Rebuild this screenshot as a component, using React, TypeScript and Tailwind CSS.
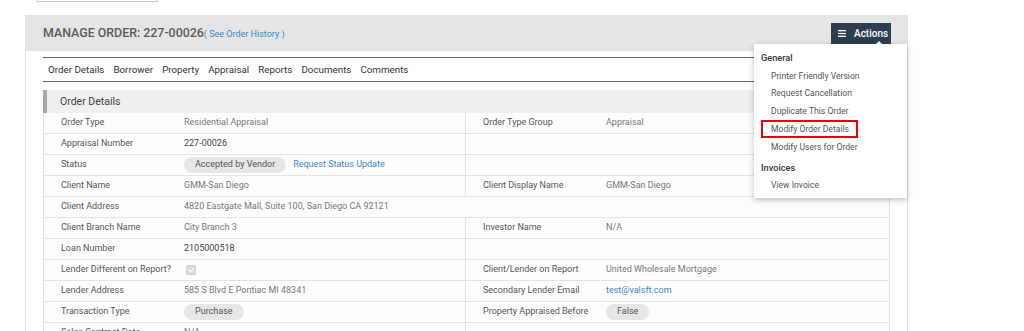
import React from 'react';

type Cell = { label: string; value?: React.ReactNode };

const Pill = ({ children }: { children: React.ReactNode }) => (
  <span className="inline-flex h-[16px] items-center rounded-full bg-[#e6e6e6] px-[11px] text-[9px] text-[#555]">{children}</span>
);

const rows: { left: Cell; right?: Cell; full?: boolean }[] = [
  { left: { label: 'Order Type', value: 'Residential Appraisal' }, right: { label: 'Order Type Group', value: 'Appraisal' } },
  { left: { label: 'Appraisal Number', value: <span className="text-[#444]">227-00026</span> }, right: { label: '' } },
  {
    left: {
      label: 'Status',
      value: (
        <span className="flex items-center gap-[7px]">
          <Pill>Accepted by Vendor</Pill>
          <span className="text-[#3b87c6]">Request Status Update</span>
        </span>
      ),
    },
    right: { label: '' },
  },
  { left: { label: 'Client Name', value: 'GMM-San Diego' }, right: { label: 'Client Display Name', value: 'GMM-San Diego' } },
  { left: { label: 'Client Address', value: '4820 Eastgate Mall, Suite 100, San Diego CA 92121' }, full: true },
  { left: { label: 'Client Branch Name', value: 'City Branch 3' }, right: { label: 'Investor Name', value: 'N/A' } },
  { left: { label: 'Loan Number', value: <span className="text-[#444]">2105000518</span> }, right: { label: '' } },
  {
    left: {
      label: 'Lender Different on Report?',
      value: (
        <span className="ml-[2px] flex h-[10px] w-[10px] items-center justify-center rounded-[2px] border border-[#cfcfcf] bg-[#dcdcdc]">
          <svg width="7" height="6" viewBox="0 0 7 6">
            <path d="M1 3 L2.8 4.8 L6 1.2" stroke="#f4f4f4" strokeWidth="1.3" fill="none" />
          </svg>
        </span>
      ),
    },
    right: { label: 'Client/Lender on Report', value: 'United Wholesale Mortgage' },
  },
  { left: { label: 'Lender Address', value: '585 S Blvd E Pontiac MI 48341' }, right: { label: 'Secondary Lender Email', value: <span className="text-[#3b87c6]">test@valsft.com</span> } },
  { left: { label: 'Transaction Type', value: <Pill>Purchase</Pill> }, right: { label: 'Property Appraised Before', value: <Pill>False</Pill> } },
  { left: { label: 'Sales Contract Date', value: 'N/A' }, right: { label: '' } },
];

const CellView = ({ cell }: { cell: Cell }) => (
  <div className="flex h-full items-center pl-[17px]">
    <span className="w-[123px] shrink-0 text-[#555]">{cell.label}</span>
    <span className="text-[#777]">{cell.value}</span>
  </div>
);

const menu = ['Printer Friendly Version', 'Request Cancellation', 'Duplicate This Order', 'Modify Order Details', 'Modify Users for Order'];

export default function App() {
  return (
    <div className="h-[331px] w-[1024px] overflow-hidden bg-white font-['Roboto',sans-serif]">
      <div className="ml-[36px] h-[2px] w-[122px] rounded-b-[3px] border-x border-b border-[#c8c8c8]" />

      <div className="ml-[25px] mt-[13px] w-[883px] border border-[#e2e2e2]">
        {/* Header */}
        <div className="flex h-[35px] items-center justify-between bg-[#e5e5e5] pl-[17px] pr-[16px]">
          <div className="flex items-baseline">
            <span className="text-[12.4px] font-medium text-[#5a5a5a]">MANAGE ORDER: 227-00026</span>
            <span className="text-[9px] text-[#3b87c6]">( See Order History )</span>
          </div>
          <div className="relative">
            <button className="flex h-[21px] w-[60px] items-center gap-[8px] bg-[#2c3e50] pl-[7px] text-[10px] font-medium text-white">
              <svg width="8" height="7" viewBox="0 0 8 7">
                <rect x="0" y="0" width="8" height="1.3" fill="white" />
                <rect x="0" y="2.85" width="8" height="1.3" fill="white" />
                <rect x="0" y="5.7" width="8" height="1.3" fill="white" />
              </svg>
              Actions
            </button>
            <div className="absolute left-[44px] top-[18px] h-0 w-0 border-x-[4px] border-b-[4px] border-x-transparent border-b-white" />
            <div className="absolute right-[-16px] top-full z-10 w-[153px] bg-white pb-[3px] pt-[5px] shadow-[0_2px_6px_rgba(0,0,0,0.25)]">
              <div className="flex h-[18px] items-center pl-[7px] text-[9.2px] font-medium text-[#333]">General</div>
              {menu.map((m) => (
                <div key={m} className="flex h-[17.75px] items-center pl-[7px] text-[8.6px] leading-none text-[#555]">
                  <span className={`border-2 py-[3px] pl-[8px] pr-[7px] ${m === 'Modify Order Details' ? 'border-[#e8000b]' : 'border-transparent'}`}>{m}</span>
                </div>
              ))}
              <div className="mt-[3px] flex h-[18px] items-center pl-[7px] text-[9.2px] font-medium text-[#333]">Invoices</div>
              <div className="flex h-[18px] items-center pl-[17px] text-[8.6px] text-[#555]">View Invoice</div>
            </div>
          </div>
        </div>

        {/* Body */}
        <div className="px-[17px] pt-[6px]">
          <div className="flex h-[25px] items-center gap-[9px] border-y border-[#666] pl-[5px] pt-[2px] text-[9.8px] text-[#333]">
            <span>Order Details</span>
            <span>Borrower</span>
            <span>Property</span>
            <span>Appraisal</span>
            <span>Reports</span>
            <span>Documents</span>
            <span>Comments</span>
          </div>

          <div className="mt-[8px] flex h-[23px] items-center border-l-[4px] border-[#a6a6a6] bg-[#efefef] pl-[13px] text-[10.5px] text-[#444]">
            Order Details
          </div>

          <div className="border-x border-[#e3e3e3] text-[9px]">
            {rows.map((r, i) => (
              <div key={i} className="grid h-[21px] grid-cols-[422px_1fr] border-b border-[#e3e3e3] bg-[#fdfdfd]">
                {r.full ? (
                  <div className="col-span-2">
                    <CellView cell={r.left} />
                  </div>
                ) : (
                  <>
                    <div className="border-r border-[#e3e3e3]">
                      <CellView cell={r.left} />
                    </div>
                    <CellView cell={r.right ?? { label: '' }} />
                  </>
                )}
              </div>
            ))}
          </div>
        </div>
      </div>
    </div>
  );
}
